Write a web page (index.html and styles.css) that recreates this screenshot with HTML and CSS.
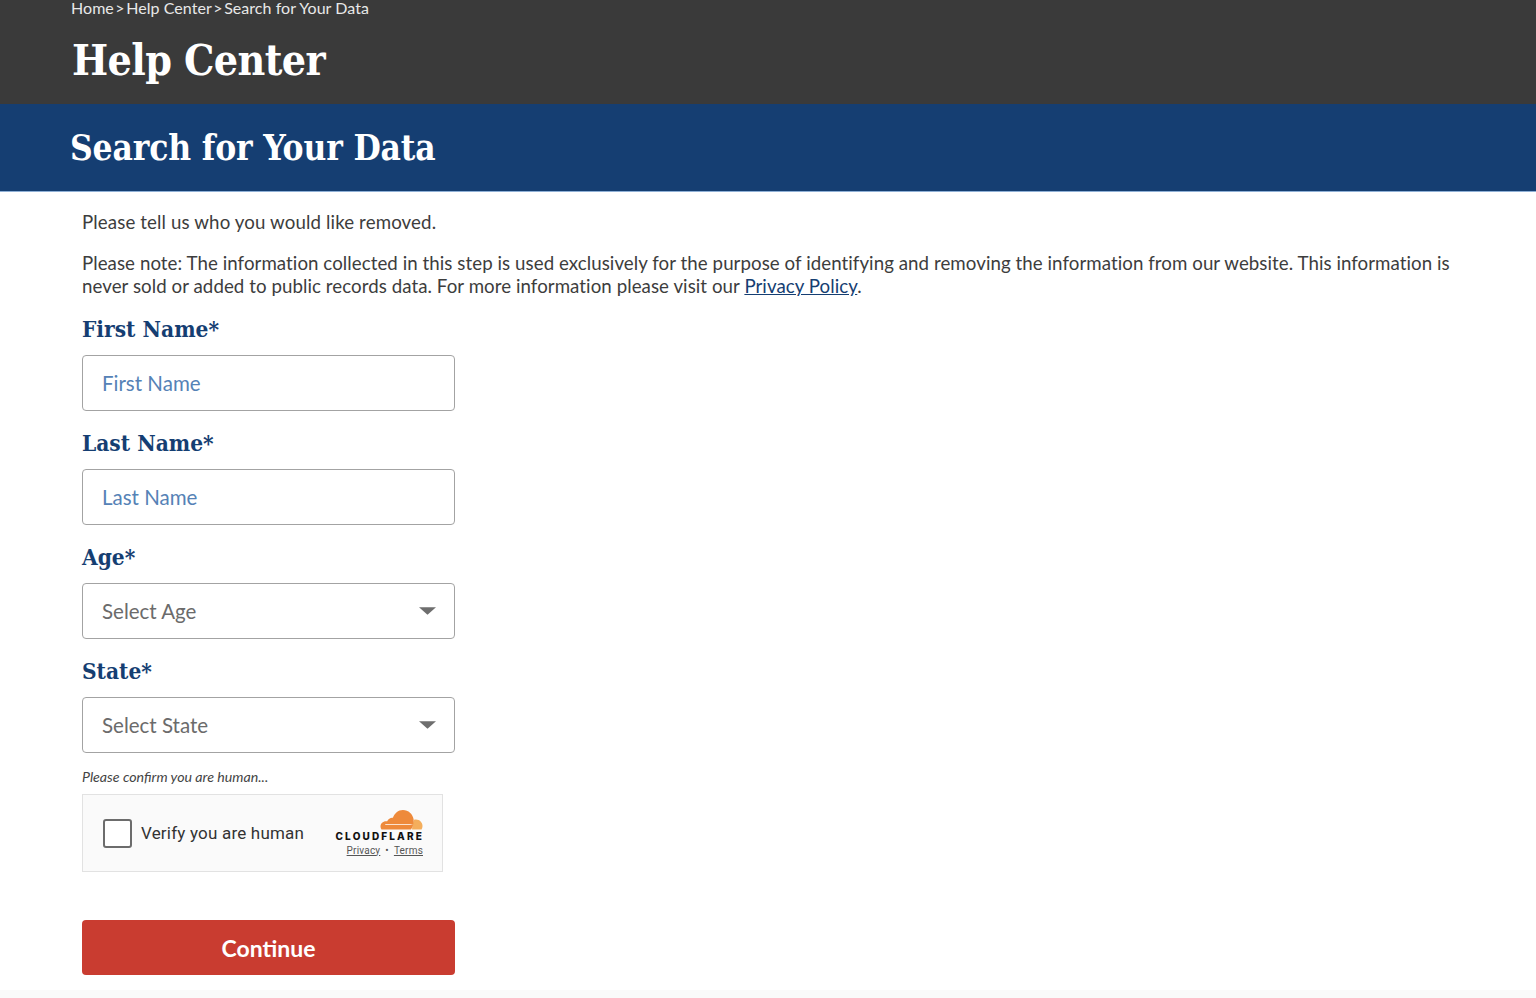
FILE: index.html
```html
<!DOCTYPE html>
<html lang="en">
<head>
<meta charset="utf-8">
<title>Search for Your Data - Help Center</title>
<link rel="stylesheet" href="styles.css">
</head>
<body>
<header class="top">
  <nav class="crumbs"><a>Home</a><span class="sep">&gt;</span><a>Help Center</a><span class="sep">&gt;</span><a>Search for Your Data</a></nav>
  <div class="brand">Help Center</div>
</header>
<section class="band"><h1>Search for Your Data</h1></section>
<main class="content">
  <p class="lead">Please tell us who you would like removed.</p>
  <p class="note">Please note: The information collected in this step is used exclusively for the purpose of identifying and removing the information from our website. This information is never sold or added to public records data. For more information please visit our <a class="link">Privacy Policy</a>.</p>
  <form class="form">
    <label class="field"><span class="label">First Name*</span><input class="control" placeholder="First Name"></label>
    <label class="field"><span class="label">Last Name*</span><input class="control" placeholder="Last Name"></label>
    <label class="field"><span class="label">Age*</span>
      <span class="select-wrap"><select class="control select"><option>Select Age</option></select><svg class="caret" viewBox="0 0 18 8"><path d="M0 0H18L9 8Z"/></svg></span>
    </label>
    <label class="field"><span class="label">State*</span>
      <span class="select-wrap"><select class="control select"><option>Select State</option></select><svg class="caret" viewBox="0 0 18 8"><path d="M0 0H18L9 8Z"/></svg></span>
    </label>
    <p class="confirm">Please confirm you are human...</p>
    <div class="turnstile">
      <span class="check"></span>
      <span class="verify">Verify you are human</span>
      <div class="cf">
        <svg class="cloud" viewBox="0 0 44 22">
          <path fill="#f4ae5c" d="M33 20.500h10c.7-1.200 1-2.600 1-3.800 0-3.700-3-6.800-6.800-6.800-.8 0-1.400.1-2 .3L33.500 15z"/>
          <path fill="#ee8a3b" d="M1 20.500C.4 19.600 0 18.500 0 17.400 0 14.200 2.500 11.700 5.700 11.700c.5 0 .9 0 1.300.1C8.200 9.300 10.700 7.800 13 8.200 14.500 3.500 18.500 0 23.500 0c5.700 0 10.400 4.300 11.200 9.800 .3 2.500-.4 7.700-2.700 10.700z"/>
          <path fill="#fff" d="M5 15.600h26l3.500-.4-3.500-.4H5z"/>
        </svg>
        <div class="wordmark">CLOUDFLARE</div>
        <div class="cf-links"><span class="u">Privacy</span><span class="dot">•</span><span class="u">Terms</span></div>
      </div>
    </div>
    <button type="button" class="submit">Continue</button>
  </form>
</main>
<footer class="foot"></footer>
</body>
</html>
```
FILE: styles.css
```css
* { box-sizing: border-box; }
html, body { margin: 0; padding: 0; }
body {
  background: #fff;
  color: #3d3d3d;
  font-family: "Lato", "Noto Sans", sans-serif;
  height: 998px;
  overflow: hidden;
  display: flex;
  flex-direction: column;
}
.top {
  background: #3a3a3a;
  height: 104px;
  padding: 0 0 0 71px;
  color: #fff;
}
.crumbs {
  display: flex;
  height: 16px;
  align-items: center;
  font-size: 16px;
  line-height: 16px;
  color: #e8e8e8;
  letter-spacing: .05px;
}
.sep { margin: 0 1.500px; }
.brand {
  font-family: "DejaVu Serif Condensed", "DejaVu Serif", serif;
  font-weight: 700;
  font-size: 42.500px;
  line-height: 56px;
  margin: 16px 0 0 1px;
  letter-spacing: -.6px;
}
.band {
  background: #153e72;
  height: 88px;
  padding: 1px 0 0 70px;
  display: flex;
  align-items: center;
  border-bottom: 1px solid #8fb0d6;
}
.band h1 {
  margin: 0;
  color: #fff;
  font-family: "DejaVu Serif Condensed", "DejaVu Serif", serif;
  font-weight: 700;
  font-size: 35px;
  line-height: 44px;
  letter-spacing: -.15px;
}
.content { padding: 19px 0 0 82px; flex: 1; }
.lead, .note {
  margin: 0;
  font-size: 18.700px;
  line-height: 23px;
  width: 1380px;
}
.lead { letter-spacing: .12px; }
.note { margin-top: 18px; letter-spacing: .06px; }
.link { color: #153e72; text-decoration: underline; }
.form { display: flex; flex-direction: column; width: 373px; margin-top: 16px; }
.field { display: flex; flex-direction: column; }
.field + .field { margin-top: 17px; }
.label {
  font-family: "DejaVu Serif Condensed", "DejaVu Serif", serif;
  font-weight: 700;
  font-size: 22.500px;
  line-height: 30px;
  color: #153e72;
  margin-bottom: 11px;
}
.control {
  width: 373px;
  height: 56px;
  border: 1px solid #a3a3a3;
  border-radius: 4px;
  background: #fff;
  padding: 0 19px;
  font-family: inherit;
  font-size: 20.500px;
  color: #6b6b6b;
  outline: none;
}
.control::placeholder { color: #5582b6; opacity: 1; }
.select { appearance: none; -webkit-appearance: none; display: block; }
.select-wrap { position: relative; display: block; height: 56px; }
.caret {
  position: absolute;
  right: 19px;
  top: 24px;
  width: 17px;
  height: 8px;
  fill: #6e6e6e;
}
.confirm {
  margin: 15px 0 8px;
  font-size: 14.200px;
  line-height: 18px;
  font-style: italic;
  color: #444;
}
.turnstile {
  width: 361px;
  height: 78px;
  background: #fafafa;
  border: 1px solid #e2e2e2;
  display: flex;
  align-items: center;
  padding: 0 19px 0 20px;
}
.check {
  width: 29px;
  height: 29px;
  background: #fff;
  border: 2px solid #6c6c6c;
  border-radius: 3px;
  flex: none;
}
.verify {
  margin-left: 9px;
  font-family: "Roboto", sans-serif;
  font-size: 17px;
  letter-spacing: .2px;
  color: #333;
  flex: 1;
  white-space: nowrap;
}
.cf { display: flex; flex-direction: column; align-items: flex-end; width: 90px; }
.cloud { width: 43px; height: 21px; display: block; }
.wordmark {
  font-family: "Inter", "Liberation Sans", sans-serif;
  font-weight: 800;
  font-size: 10px;
  line-height: 11px;
  letter-spacing: 2.150px;
  color: #111;
  margin-right: -1px;
  white-space: nowrap;
}
.cf-links {
  display: flex;
  gap: 5px;
  margin-top: 3px;
  font-family: "Roboto", sans-serif;
  font-size: 10px;
  line-height: 12px;
  color: #555;
  letter-spacing: .2px;
}
.u { text-decoration: underline; }
.submit {
  width: 373px;
  height: 55px;
  margin-top: 48px;
  background: #c93c30;
  color: #fff;
  border: 0;
  border-radius: 4px;
  font-family: "Lato", sans-serif;
  font-weight: 700;
  font-size: 23px;
  cursor: pointer;
}
.foot { height: 8px; background: #fafafa; flex: none; }
```
